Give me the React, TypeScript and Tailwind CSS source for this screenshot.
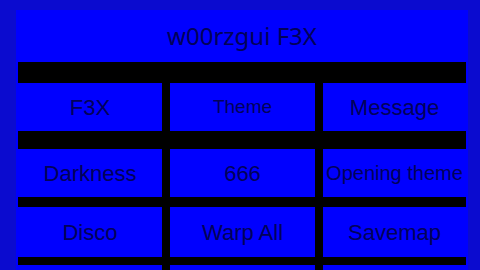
import React from 'react';

const rows: { labels: string[]; sizes: string[]; gap: string; h: string }[] = [
  { labels: ['F3X', 'Theme', 'Message'], sizes: ['text-[22px]', 'text-[19px]', 'text-[22px]'], gap: 'mt-0', h: 'h-[48px]' },
  { labels: ['Darkness', '666', 'Opening theme'], sizes: ['text-[22px]', 'text-[22px]', 'text-[20px]'], gap: 'mt-[18px]', h: 'h-[48px]' },
  { labels: ['Disco', 'Warp All', 'Savemap'], sizes: ['text-[22px]', 'text-[22px]', 'text-[22px]'], gap: 'mt-[10px]', h: 'h-[50px]' },
  { labels: ['', '', ''], sizes: ['text-[22px]', 'text-[22px]', 'text-[22px]'], gap: 'mt-[8px]', h: 'h-[48px]' },
];

export default function App() {
  return (
    <div className="w-[480px] h-[270px] overflow-hidden bg-[#0b0bcf] pl-[16px] pt-[10px]">
      <div className="w-[452px] h-[300px] bg-[#0000ff] px-[2px]">
        <div className="h-[52px] flex items-center justify-center text-[#020258] text-[24px] font-['Noto_Sans',sans-serif]">
          w00rzgui F3X
        </div>
        <div className="bg-black pt-[21px] pb-[40px] font-['Liberation_Sans',Arial,sans-serif] text-[#020258]">
          {rows.map((row, i) => (
            <div key={i} className={`grid grid-cols-[144px_145px_143px] gap-x-[8px] ${row.gap}`}>
              {row.labels.map((label, j) => (
                <div key={j} className={`${row.h} bg-[#0000ff] flex items-center justify-center whitespace-nowrap ${row.sizes[j]}`}>
                  {label}
                </div>
              ))}
            </div>
          ))}
        </div>
      </div>
    </div>
  );
}
